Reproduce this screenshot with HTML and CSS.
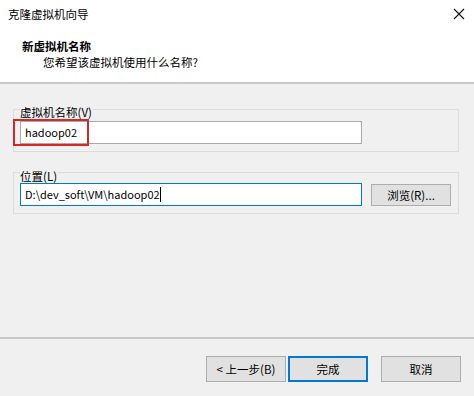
FILE: index.html
```html
<!DOCTYPE html>
<html lang="zh-CN">
<head>
<meta charset="utf-8">
<title>克隆虚拟机向导</title>
<link rel="stylesheet" href="styles.css">
</head>
<body>
<div class="window">
  <div class="top">
    <div class="titlebar">
      <span class="title">克隆虚拟机向导</span>
      <svg class="close" width="12" height="12" viewBox="0 0 12 12"><path d="M1 1 L11 11 M11 1 L1 11" stroke="#111" stroke-width="1.1" fill="none"/></svg>
    </div>
    <div class="header">
      <div class="h-title">新虚拟机名称</div>
      <div class="h-sub">您希望该虚拟机使用什么名称?</div>
    </div>
  </div>
  <div class="sep"></div>
  <div class="main">
    <div class="group g1">
      <div class="legend">虚拟机名称(V)</div>
      <div class="field">
        <div class="input">hadoop02</div>
        <div class="highlight"></div>
      </div>
    </div>
    <div class="group g2">
      <div class="legend">位置(L)</div>
      <div class="row">
        <div class="input focus">D:\dev_soft\VM\hadoop02<span class="caret"></span></div>
        <div class="btn browse">浏览(R)...</div>
      </div>
    </div>
  </div>
  <div class="sep"></div>
  <div class="footer">
    <div class="btn">&lt; 上一步(B)</div>
    <div class="btn primary">完成</div>
    <div class="btn cancel">取消</div>
  </div>
</div>
</body>
</html>
```
FILE: styles.css
```css
html, body {
  margin: 0;
  padding: 0;
}
body {
  width: 474px;
  height: 396px;
  overflow: hidden;
  background: #f0f0f0;
  font-family: "Noto Sans CJK SC", "Noto Sans", sans-serif;
  font-size: 11.5px;
  color: #000;
}
.window {
  width: 474px;
  height: 396px;
  display: flex;
  flex-direction: column;
}
.top {
  background: #fff;
  height: 82px;
}
.titlebar {
  height: 29px;
  display: flex;
  align-items: center;
  justify-content: space-between;
  padding: 0 9px 0 8px;
}
.title {
  line-height: 14px;
  margin-top: -1px;
}
.close {
  display: block;
  margin-top: -1px;
}
.header {
  padding-top: 9px;
}
.h-title {
  font-weight: bold;
  line-height: 16px;
  padding-left: 22px;
}
.h-sub {
  line-height: 16px;
  padding-left: 43px;
}
.sep {
  height: 2px;
  background: #c9c9c9;
}
.main {
  height: 253px;
  padding-top: 25px;
  box-sizing: border-box;
  display: flex;
  flex-direction: column;
  gap: 20px;
}
.group {
  margin-left: 13px;
  width: 446px;
  box-sizing: border-box;
  border: 1px solid #dcdcdc;
  padding: 0 6px 7px 6px;
}
.legend {
  width: fit-content;
  margin-top: -5px;
  margin-left: 0;
  padding: 0 1px 0 0;
  line-height: 14px;
  background: #f0f0f0;
}
.field {
  position: relative;
  margin-top: 2px;
  width: 342px;
}
.input {
  width: 342px;
  height: 23px;
  box-sizing: border-box;
  border: 1px solid #a9a9a9;
  background: #fff;
  padding-left: 4px;
  line-height: 21px;
  font-size: 11px;
  white-space: nowrap;
}
.input.focus {
  border-color: #0078d7;
}
.caret {
  display: inline-block;
  width: 1px;
  height: 15px;
  background: #000;
  vertical-align: -3px;
}
.highlight {
  position: absolute;
  left: -7px;
  top: -2px;
  width: 76px;
  height: 27px;
  box-sizing: border-box;
  border: 2px solid #d8262b;
}
.g2 .legend {
  margin-top: -4px;
}
.row {
  display: flex;
  align-items: center;
  gap: 9px;
  margin-top: 0;
}
.btn {
  width: 80px;
  height: 26px;
  box-sizing: border-box;
  border: 1px solid #adadad;
  background: #e1e1e1;
  display: flex;
  align-items: center;
  justify-content: center;
  line-height: 14px;
}
.browse {
  height: 22px;
  margin-top: 1px;
}
.footer {
  flex: 1;
  display: flex;
  align-items: flex-start;
  padding: 17px 0 0 206px;
}
.primary {
  margin-left: 2px;
  border: 2px solid #0078d7;
}
.cancel {
  margin-left: 13px;
}
```
